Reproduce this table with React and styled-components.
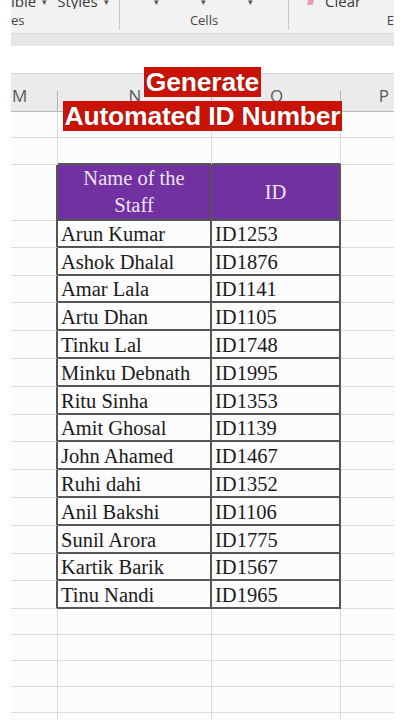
import React from 'react';
import styled, { createGlobalStyle } from 'styled-components';

const GlobalStyle = createGlobalStyle`
  html, body {
    margin: 0;
    padding: 0;
    background: #ffffff;
  }
  body {
    width: 405px;
    height: 720px;
    overflow: hidden;
    font-family: 'Open Sans', 'Noto Sans', sans-serif;
  }
`;

const staff = [
  ['Arun Kumar', 'ID1253'],
  ['Ashok Dhalal', 'ID1876'],
  ['Amar Lala', 'ID1141'],
  ['Artu Dhan', 'ID1105'],
  ['Tinku Lal', 'ID1748'],
  ['Minku Debnath', 'ID1995'],
  ['Ritu Sinha', 'ID1353'],
  ['Amit Ghosal', 'ID1139'],
  ['John Ahamed', 'ID1467'],
  ['Ruhi dahi', 'ID1352'],
  ['Anil Bakshi', 'ID1106'],
  ['Sunil Arora', 'ID1775'],
  ['Kartik Barik', 'ID1567'],
  ['Tinu Nandi', 'ID1965'],
];

const GRID = '#dcdadc';
const DARK = '#555555';
const COLS = '47px 154px 129px 53px';

const Page = styled.div`
  position: relative;
  width: 405px;
  height: 720px;
  overflow: hidden;
  padding-left: 11px;
  box-sizing: border-box;
`;

const Ribbon = styled.div`
  width: 383px;
  height: 33px;
  background: #f3f2f2;
  display: grid;
  grid-template-columns: 109px 169px 105px;
`;

const Group = styled.div`
  display: flex;
  flex-direction: column;
  justify-content: space-between;
  border-right: ${(p) => (p.$last ? 'none' : '1px solid #c9c7c7')};
  height: 30px;
  overflow: hidden;
`;

const Controls = styled.div`
  display: flex;
  justify-content: ${(p) => p.$justify || 'flex-start'};
  gap: ${(p) => p.$gap || '18px'};
  height: 9px;
  overflow: hidden;
  padding-left: ${(p) => p.$pad || '0'};
`;

const Control = styled.span`
  font-size: 15px;
  line-height: 15px;
  margin-top: -7px;
  color: #3a3a3a;
  white-space: nowrap;
  display: flex;
  align-items: center;
  gap: 6px;
`;

const Caret = styled.span`
  font-size: 9px;
  color: #555;
`;

const GroupLabel = styled.div`
  font-size: 13px;
  line-height: 15px;
  color: #444;
  padding-bottom: 2px;
  text-align: ${(p) => p.$align || 'center'};
`;

const Scrollbar = styled.div`
  width: 383px;
  height: 13px;
  background: linear-gradient(#dcdcdc 0 1px, #e6e6e6 1px);
`;

const Spacer = styled.div`
  height: 27px;
`;

const Sheet = styled.div`
  width: 383px;
  background: #fdfcfd;
`;

const HeaderRow = styled.div`
  display: grid;
  grid-template-columns: ${COLS};
  height: 39px;
  border-top: 1px solid #d4d4d4;
  border-bottom: 1px solid #b9b9b9;
  box-sizing: border-box;
  background: #ebebeb;
`;

const HeaderCell = styled.div`
  display: flex;
  align-items: flex-end;
  justify-content: ${(p) => p.$justify || 'center'};
  padding: 0 ${(p) => p.$padR || '0'} 7px ${(p) => p.$padL || '0'};
  font-size: 17px;
  line-height: 17px;
  color: #5a5a5a;
  background: ${(p) =>
    p.$divider ? 'linear-gradient(#b3b3b3, #b3b3b3) right bottom / 1px 20px no-repeat' : 'none'};
`;

const Row = styled.div`
  display: grid;
  grid-template-columns: ${COLS};
  height: ${(p) => p.$h}px;
`;

const Cell = styled.div`
  box-sizing: border-box;
  border-right: ${(p) => (p.$right ? `${p.$rw || 1}px solid ${p.$right}` : 'none')};
  border-bottom: ${(p) => `${p.$bw || 1}px solid ${p.$bottom || GRID}`};
  background: ${(p) => p.$bg || 'transparent'};
  display: flex;
  align-items: ${(p) => (p.$center ? 'center' : 'flex-end')};
  justify-content: ${(p) => (p.$center ? 'center' : 'flex-start')};
  text-align: ${(p) => (p.$center ? 'center' : 'left')};
  padding: ${(p) => (p.$center ? '0' : '0 0 2px 3px')};
  font-family: 'Liberation Serif', 'Times New Roman', serif;
  font-size: 20.5px;
  line-height: ${(p) => (p.$center ? '27px' : '20px')};
  color: ${(p) => p.$color || '#1a1a1a'};
  white-space: nowrap;
`;

const Title = styled.div`
  position: absolute;
  top: 67px;
  left: 0;
  width: 405px;
  display: flex;
  flex-direction: column;
  align-items: center;
  gap: 4px;
  pointer-events: none;
`;

const TitleLine = styled.span`
  background: #c91306;
  color: #ffffff;
  font-family: 'Liberation Sans', Arial, sans-serif;
  font-weight: 700;
  font-size: 26.5px;
  line-height: 28px;
  padding: 1px 2px;
  letter-spacing: -0.2px;
  text-shadow: 0 0 1px rgba(60, 0, 0, 0.7);
`;

const blank = (h, key, bottoms = []) => (
  <Row key={key} $h={h}>
    <Cell $right={GRID} />
    <Cell $right={GRID} $bottom={bottoms[1]} $bw={bottoms[1] ? 2 : 1} />
    <Cell $right={GRID} $bottom={bottoms[2]} $bw={bottoms[2] ? 2 : 1} />
    <Cell />
  </Row>
);

const App = () => {
  return (
    <Page>
      <GlobalStyle />
      <Ribbon>
        <Group>
          <Controls $gap="10px">
            <Control>
              ıble <Caret>▾</Caret>
            </Control>
            <Control>
              Styles <Caret>▾</Caret>
            </Control>
          </Controls>
          <GroupLabel $align="left">es</GroupLabel>
        </Group>
        <Group>
          <Controls $gap="42px" $pad="34px">
            <Control><Caret>▾</Caret></Control>
            <Control><Caret>▾</Caret></Control>
            <Control><Caret>▾</Caret></Control>
          </Controls>
          <GroupLabel>Cells</GroupLabel>
        </Group>
        <Group $last>
          <Controls $pad="18px" $gap="8px">
            <Control>
              <svg width="10" height="12" viewBox="0 0 10 12">
                <path d="M2 0 L8 0 L6 10 L0 10 Z" fill="#e7a1b3" />
              </svg>
            </Control>
            <Control>Clear</Control>
          </Controls>
          <GroupLabel $align="right">E</GroupLabel>
        </Group>
      </Ribbon>
      <Scrollbar />
      <Spacer />
      <Sheet>
        <HeaderRow>
          <HeaderCell $justify="flex-start" $padL="1px" $divider>M</HeaderCell>
          <HeaderCell $divider>N</HeaderCell>
          <HeaderCell $divider>O</HeaderCell>
          <HeaderCell $justify="flex-end" $padR="5px">P</HeaderCell>
        </HeaderRow>
        {blank(26, 'b1')}
        {blank(27, 'b2', [null, DARK, DARK])}
        <Row $h={55}>
          <Cell $right={DARK} $rw={2} />
          <Cell $center $bg="#7131a1" $color="#ece2f5" $right={DARK} $rw={2} $bottom={DARK} $bw={2}>
            Name of the
            <br />
            Staff
          </Cell>
          <Cell $center $bg="#7131a1" $color="#ece2f5" $right={DARK} $rw={2} $bottom={DARK} $bw={2}>
            ID
          </Cell>
          <Cell />
        </Row>
        {staff.map(([name, id]) => (
          <Row key={id} $h={27.8}>
            <Cell $right={DARK} $rw={2} />
            <Cell $right={DARK} $rw={2} $bottom={DARK} $bw={2}>{name}</Cell>
            <Cell $right={DARK} $rw={2} $bottom={DARK} $bw={2}>{id}</Cell>
            <Cell />
          </Row>
        ))}
        {[0, 1, 2, 3, 4].map((i) => blank(26, 'a' + i))}
      </Sheet>
      <Title>
        <TitleLine>Generate</TitleLine>
        <TitleLine>Automated ID Number</TitleLine>
      </Title>
    </Page>
  );
};

export default App;
